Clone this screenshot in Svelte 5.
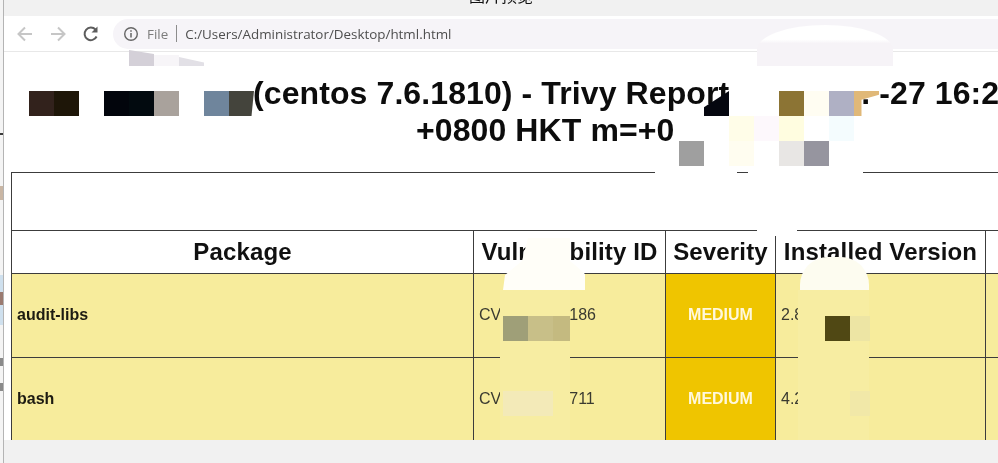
<script>
    // mosaic tiles and smears painted over the screenshot
    const patches = [
        // left edge fragments
        { x: 0, y: 133, w: 3, h: 2, c: "#3a3a3a" },
        { x: 0, y: 186, w: 3, h: 14, c: "#c9b6a4" },
        { x: 0, y: 275, w: 3, h: 50, c: "#cfe0ee" },
        { x: 0, y: 292, w: 3, h: 13, c: "#9a7a70" },
        { x: 0, y: 358, w: 3, h: 8, c: "#8a8a8a" },
        { x: 0, y: 383, w: 3, h: 8, c: "#8a8a8a" },
        // top of the page
        { x: 129, y: 50, w: 25, h: 16, c: "#d4d0d8", clip: "polygon(0 0, 100% 25%, 100% 100%, 0 100%)" },
        { x: 154, y: 55, w: 25, h: 11, c: "#f7f5f8" },
        { x: 179, y: 57, w: 25, h: 9, c: "#e2e0e6", clip: "polygon(0 0, 100% 60%, 100% 100%, 0 100%)" },
        { x: 757, y: 25, w: 136, h: 41, c: "linear-gradient(#fff 35%, #f6f3f7 45%)", r: "50% 50% 4px 4px / 60% 60% 0 0" },
        // first title line
        { x: 29, y: 91, w: 25, h: 25, c: "#32221c" },
        { x: 54, y: 91, w: 25, h: 25, c: "#1e1608" },
        { x: 104, y: 91, w: 25, h: 25, c: "#02050c" },
        { x: 129, y: 91, w: 25, h: 25, c: "#020a0f" },
        { x: 154, y: 91, w: 25, h: 25, c: "#a9a29c" },
        { x: 204, y: 91, w: 25, h: 25, c: "#6f859c" },
        { x: 229, y: 91, w: 25, h: 25, c: "#44443c", clip: "polygon(0 0, 100% 0, 90% 100%, 0 100%)" },
        { x: 704, y: 91, w: 25, h: 25, c: "#05070f", clip: "polygon(0 65%, 100% 0, 100% 100%, 0 100%)" },
        { x: 779, y: 91, w: 25, h: 25, c: "#8c7434" },
        { x: 804, y: 91, w: 25, h: 25, c: "#fffdf2" },
        { x: 829, y: 91, w: 25, h: 25, c: "#afb0c4" },
        { x: 854, y: 91, w: 25, h: 25, c: "#e0b878", clip: "polygon(0 0, 100% 0, 100% 15%, 30% 35%, 30% 100%, 0 100%)" },
        // second and third rows of the mosaic
        { x: 675, y: 116, w: 54, h: 50, c: "#fff" },
        { x: 729, y: 116, w: 25, h: 25, c: "#fffde8" },
        { x: 754, y: 116, w: 25, h: 25, c: "#fdf8fc" },
        { x: 779, y: 116, w: 25, h: 25, c: "#fffde0" },
        { x: 829, y: 116, w: 25, h: 25, c: "#f4fcfe" },
        { x: 679, y: 141, w: 25, h: 25, c: "#9f9f9f" },
        { x: 729, y: 141, w: 25, h: 25, c: "#fffdf0" },
        { x: 779, y: 141, w: 25, h: 25, c: "#e8e6e4" },
        { x: 804, y: 141, w: 25, h: 25, c: "#96959f" },
        // breaks in the table borders
        { x: 655, y: 168, w: 82, h: 8, c: "#fff" },
        { x: 748, y: 168, w: 115, h: 8, c: "#fff" },
        { x: 757, y: 226, w: 40, h: 10, c: "#fff" },
        // smears over the Vulnerability ID column
        { x: 503, y: 237, w: 82, h: 53, c: "#fffef8", clip: "polygon(25px 1px, 67px 1px, 67px 24px, 72px 28px, 82px 37px, 82px 53px, 0 53px, 2px 38px, 19px 24px)" },
        { x: 500, y: 290, w: 70, h: 150, c: "#f7eda2" },
        { x: 503, y: 316, w: 25, h: 25, c: "#9f9f78" },
        { x: 528, y: 316, w: 25, h: 25, c: "#c8bf88" },
        { x: 553, y: 316, w: 17, h: 25, c: "#c4ba80" },
        { x: 503, y: 391, w: 50, h: 25, c: "#f3eab8" },
        // smears over the Installed Version column
        { x: 800, y: 257, w: 69, h: 33, c: "#fdfcf0", r: "28px 28px 0 0" },
        { x: 798, y: 290, w: 71, h: 150, c: "#f7eda2" },
        { x: 825, y: 316, w: 25, h: 25, c: "#504814" },
        { x: 850, y: 316, w: 20, h: 25, c: "#ede5a4" },
        { x: 850, y: 391, w: 20, h: 25, c: "#f1e8a8" }
    ];

    const rows = [
        { name: "audit-libs", id: "186", version: "2.8" },
        { name: "bash", id: "711", version: "4.2" }
    ];
</script>

<div class="screen">
    <div class="side"></div>

    <div class="window">
        <div class="caption"><span>图片预览</span></div>

        <div class="toolbar">
            <svg class="nav" width="20" height="20" viewBox="0 0 20 20">
                <path d="M17 10H4M10 3.5 3.5 10l6.5 6.5" fill="none" stroke="#c6c6c6" stroke-width="2" />
            </svg>
            <svg class="nav" width="20" height="20" viewBox="0 0 20 20">
                <path d="M3 10h13M10 3.5l6.500 6.500-6.500 6.500" fill="none" stroke="#c6c6c6" stroke-width="2" />
            </svg>
            <svg class="nav" width="20" height="20" viewBox="0 0 20 20">
                <path d="M15.600 12.500A6.300 6.300 0 1 1 14.500 5.500" fill="none" stroke="#5c5c5c" stroke-width="2" />
                <path d="M16.500 2.500v6h-6z" fill="#5c5c5c" />
            </svg>

            <div class="address">
                <svg width="16" height="16" viewBox="0 0 16 16">
                    <circle cx="8" cy="8" r="6.300" fill="none" stroke="#666" stroke-width="1.400" />
                    <path d="M8 7v4.500M8 4.300v1.500" stroke="#666" stroke-width="1.500" />
                </svg>
                <span class="scheme">File</span>
                <span class="divider"></span>
                <span class="path">C:/Users/Administrator/Desktop/html.html</span>
            </div>
        </div>

        <div class="content">
            <h1>
                <div class="line first">
                    <span>(centos 7.6.1810) - Trivy Report</span>
                    <span>. -27 16:2</span>
                </div>
                <div class="line second">+0800 HKT m=+0</div>
            </h1>

            <table>
                <colgroup>
                    <col class="c-package" />
                    <col class="c-id" />
                    <col class="c-severity" />
                    <col class="c-version" />
                    <col class="c-rest" />
                </colgroup>
                <tbody>
                    <tr class="blank"><td colspan="5"></td></tr>
                    <tr class="head">
                        <th>Package</th>
                        <th>Vulnerability ID</th>
                        <th>Severity</th>
                        <th>Installed Version</th>
                        <th></th>
                    </tr>
                    {#each rows as row}
                        <tr class="row">
                            <td class="pkg">{row.name}</td>
                            <td>CV<span class="hole-id"></span>{row.id}</td>
                            <td class="sev">MEDIUM</td>
                            <td>{row.version}</td>
                            <td></td>
                        </tr>
                    {/each}
                </tbody>
            </table>
        </div>

        <div class="footer"></div>
    </div>

    {#each patches as p}
        <div
            class="patch"
            style="left:{p.x}px;top:{p.y}px;width:{p.w}px;height:{p.h}px;background:{p.c};border-radius:{p.r ?? 0};clip-path:{p.clip ?? 'none'}"
        ></div>
    {/each}
</div>

<style>
    :global(body) {
        overflow: hidden;
        background: #f1f1f1;
    }

    .screen {
        position: relative;
        display: flex;
        width: 998px;
        height: 463px;
        overflow: hidden;
        font-family: "Liberation Sans", Arial, sans-serif;
    }

    .side {
        width: 3px;
        border-right: 1px solid #b4b4b4;
        background: #f4f4f4;
    }

    .window {
        flex: 1;
        min-width: 0;
        display: flex;
        flex-direction: column;
        filter: blur(0.4px);
    }

    .caption {
        height: 16px;
        overflow: hidden;
        background: #f1f1f1;
        display: flex;
        justify-content: center;
        align-items: flex-end;
        font-family: "Noto Sans CJK SC", sans-serif;
        font-size: 16px;
        line-height: 20px;
        color: #111;
    }

    .caption span {
        margin-bottom: 11px;
    }

    .toolbar {
        height: 35px;
        background: #fff;
        border-bottom: 1px solid #e8e8e8;
        display: flex;
        align-items: center;
        padding-left: 11px;
        gap: 13px;
    }

    .nav {
        flex: none;
    }

    .address {
        flex: 1;
        height: 30px;
        margin-left: -1px;
        margin-right: -20px;
        padding-left: 10px;
        border-radius: 15px;
        background: #f6f4f8;
        display: flex;
        align-items: center;
        font-family: "Open Sans", sans-serif;
        font-size: 13.400px;
    }

    .scheme {
        margin-left: 8px;
        color: #7c7c7c;
    }

    .divider {
        width: 1px;
        height: 17px;
        margin: 0 8px;
        background: #8c8c8c;
    }

    .path {
        color: #4e4e4e;
    }

    .content {
        height: 388px;
        overflow: hidden;
        background: #fff;
    }

    h1 {
        margin: 0;
        padding: 23px 0;
        font-size: 32px;
        line-height: 37px;
        font-weight: bold;
        letter-spacing: 0.1px;
        color: #0c0c0c;
        white-space: nowrap;
    }

    .line {
        display: flex;
    }

    .first {
        padding-left: 249px;
        gap: 132px;
    }

    .second {
        padding-left: 412px;
    }

    table {
        margin-left: 7px;
        width: 1170px;
        table-layout: fixed;
        border-collapse: collapse;
    }

    .c-package { width: 462px; }
    .c-id { width: 192px; }
    .c-severity { width: 110px; }
    .c-version { width: 210px; }
    .c-rest { width: 196px; }

    th, td {
        border: 1px solid #3c3c3c;
        padding: 5px;
    }

    .blank td {
        height: 47px;
    }

    .head th {
        height: 32px;
        padding: 5px 0;
        font-size: 24px;
        letter-spacing: 0.15px;
        color: #101010;
        background: #fff;
    }

    .row td {
        height: 73px;
        padding: 4px 5px 6px;
        font-size: 16px;
        color: #3a3a30;
        background: #f7ec9c;
    }

    .row .pkg {
        font-weight: bold;
        color: #1d1b12;
    }

    .row .sev {
        text-align: center;
        font-weight: bold;
        color: #fff8dc;
        background: #efc500;
    }

    .hole-id {
        display: inline-block;
        width: 68px;
    }

    .footer {
        flex: 1;
        background: #f1f1f1;
    }

    .patch {
        position: absolute;
    }
</style>
